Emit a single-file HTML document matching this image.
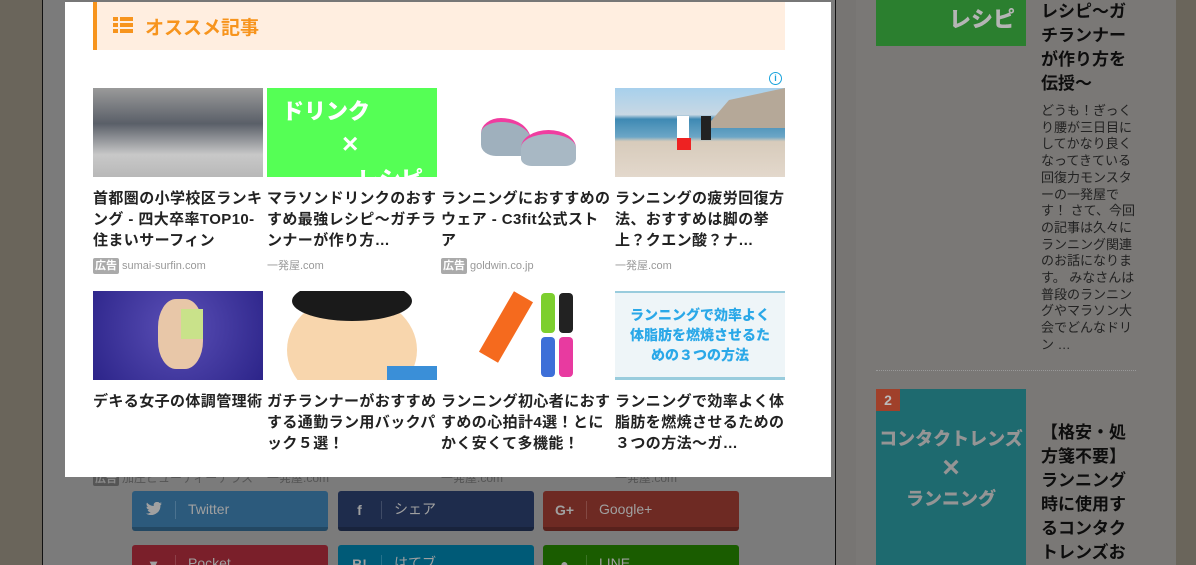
<!DOCTYPE html>
<html><head><meta charset="utf-8"><style>
*{margin:0;padding:0;box-sizing:border-box}
html,body{width:1196px;height:565px;overflow:hidden}
body{position:relative;background:#6a655b;font-family:"Liberation Sans","Noto Sans CJK JP",sans-serif}
.abs{position:absolute}
.main{left:42px;top:0;width:794px;height:565px;background:#7b7b7b;border-left:1px solid #111;border-right:1px solid #111}
.side{left:836px;top:0;width:340px;height:565px;background:#777573}
.sidecol{left:856px;top:0;width:320px;height:565px;background:#7a7876}
.st{left:1041px;width:92px;font-weight:bold;font-size:17px;line-height:24px;color:#0d0d0d}
.sb{left:1041px;top:103px;width:95px;font-size:13px;line-height:16.7px;color:#222}
.btn{height:40px;width:196px;border-radius:3px;color:#a0a0a0;font-size:14px;line-height:36px;border-bottom:4px solid rgba(0,0,0,.2)}
.btn i{display:inline-block;width:44px;text-align:center;font-style:normal;font-weight:bold;border-right:1px solid rgba(255,255,255,.15);margin-right:12px;line-height:18px;vertical-align:middle}
.modal{left:65px;top:2px;width:766px;height:475px;background:#fff;overflow:hidden}
.hdr{left:28px;top:0;width:692px;height:48px;background:#ffeee0;border-left:4px solid #f7941d}
.hdr span{position:absolute;left:48px;top:11px;font-size:19px;font-weight:bold;color:#f7941d}
.card{position:absolute;width:170px}
.img{height:89px;position:relative;overflow:hidden}
.t{margin-top:11px;font-size:15px;font-weight:bold;line-height:21px;color:#222;height:70px;letter-spacing:0.4px}
.src{font-size:11px;color:#999;line-height:16px}
.ad{display:inline-block;background:#aaa;color:#fff;font-weight:bold;font-size:11px;padding:0 2px;margin-right:3px;border-radius:2px}
</style></head><body>
<div class="abs main"></div>
<div class="abs side"></div>
<div class="abs sidecol"></div>
<div class="abs" style="left:876px;top:0;width:150px;height:46px;background:#2b7f2f;color:#b5b5b5;font-weight:900;font-size:22px;padding:2px 0 0 73px">レシピ</div>
<div class="abs st" style="top:0">レシピ～ガ<br>チランナー<br>が作り方を<br>伝授～</div>
<div class="abs sb">どうも！ぎっくり腰が三日目にしてかなり良くなってきている回復力モンスターの一発屋です！ さて、今回の記事は久々にランニング関連のお話になります。 みなさんは普段のランニングやマラソン大会でどんなドリン …</div>
<div class="abs" style="left:876px;top:370px;width:260px;border-top:1px dotted #999"></div>
<div class="abs" style="left:876px;top:389px;width:150px;height:176px;background:#1e6a6f;color:#959595;font-weight:900;text-align:center">
<div style="position:absolute;left:0;top:0;width:24px;height:22px;background:#a0402a;color:#bbb;font-size:14px;line-height:22px">2</div>
<div style="margin-top:36px;font-size:18px">コンタクトレンズ</div><div style="font-size:30px;line-height:34px">×</div><div style="font-size:18px">ランニング</div></div>
<div class="abs st" style="top:421px">【格安・処方箋不要】ランニング時に使用するコンタクトレンズお</div>
<div class="abs btn" style="left:132px;top:491px;background:#2c5a7c"><i><svg width="16" height="13" viewBox="0 0 16 13"><path d="M16 1.5a6 6 0 0 1-1.9.5A3.3 3.3 0 0 0 15.5.2a6.5 6.5 0 0 1-2 .8A3.3 3.3 0 0 0 7.8 4 9.3 9.3 0 0 1 1 .6a3.3 3.3 0 0 0 1 4.4 3.3 3.3 0 0 1-1.5-.4 3.3 3.3 0 0 0 2.6 3.2 3.3 3.3 0 0 1-1.5.1 3.3 3.3 0 0 0 3.1 2.3A6.6 6.6 0 0 1 0 11.5 9.3 9.3 0 0 0 14.4 3.2 6.7 6.7 0 0 0 16 1.5z" fill="#a0a0a0"/></svg></i>Twitter</div>
<div class="abs btn" style="left:338px;top:491px;background:#1e2c4c"><i>f</i>シェア</div>
<div class="abs btn" style="left:543px;top:491px;background:#6e2a23"><i>G+</i>Google+</div>
<div class="abs btn" style="left:132px;top:545px;background:#7a1f2a"><i>▾</i>Pocket</div>
<div class="abs btn" style="left:338px;top:545px;background:#005a77"><i>B!</i>はてブ</div>
<div class="abs btn" style="left:543px;top:545px;background:#1a5c00"><i>●</i>LINE</div>
<div class="abs" style="left:93px;top:469px;font-size:12px;color:#555"><span class="ad" style="background:#555;color:#888">広告</span>加圧ビューティーテラス</div>
<div class="abs" style="left:267px;top:469px;font-size:12px;color:#555">一発屋.com</div>
<div class="abs" style="left:441px;top:469px;font-size:12px;color:#555">一発屋.com</div>
<div class="abs" style="left:615px;top:469px;font-size:12px;color:#555">一発屋.com</div>
<div class="abs" style="left:65px;top:0;width:766px;height:2px;background:#777"></div>
<div class="abs modal">
<div class="abs hdr"><svg style="position:absolute;left:16px;top:15px" width="20" height="16"><g fill="#f7941d"><rect x="0" y="0" width="5" height="4"/><rect x="7" y="0" width="13" height="4"/><rect x="0" y="6" width="5" height="4"/><rect x="7" y="6" width="13" height="4"/><rect x="0" y="12" width="5" height="4"/><rect x="7" y="12" width="13" height="4"/></g></svg><span>オススメ記事</span></div>
<div class="abs" style="left:704px;top:70px;width:13px;height:13px;border:1.5px solid #1aa3dc;border-radius:50%;color:#1aa3dc;font-size:9px;font-weight:bold;text-align:center;line-height:10px">i</div>
<div class="card" style="left:28px;top:86px"><div class="img" style="background:linear-gradient(#9a9a9a 0%,#5a5f68 40%,#c8c8c8 75%,#b8b8b8)"></div><div class="t">首都圏の小学校区ランキング - 四大卒率TOP10-住まいサーフィン</div><div class="src"><span class="ad">広告</span>sumai-surfin.com</div></div>
<div class="card" style="left:202px;top:86px"><div class="img" style="background:#55ff55;color:#fff;font-weight:900"><div style="position:absolute;left:15px;top:6px;font-size:22px">ドリンク</div><div style="position:absolute;left:75px;top:40px;font-size:28px">×</div><div style="position:absolute;left:90px;top:74px;font-size:22px">レシピ</div></div><div class="t">マラソンドリンクのおすすめ最強レシピ～ガチランナーが作り方…</div><div class="src">一発屋.com</div></div>
<div class="card" style="left:376px;top:86px"><div class="img" style="background:#fff"><div style="position:absolute;left:40px;top:30px;width:50px;height:38px;background:#9fb0bd;border-radius:40% 60% 20% 30%;border-top:4px solid #f03da0"></div><div style="position:absolute;left:80px;top:42px;width:55px;height:36px;background:#a8b8c4;border-radius:50% 50% 20% 20%;border-top:4px solid #f03da0"></div></div><div class="t">ランニングにおすすめのウェア - C3fit公式ストア</div><div class="src"><span class="ad">広告</span>goldwin.co.jp</div></div>
<div class="card" style="left:550px;top:86px"><div class="img" style="background:linear-gradient(#a7d0ec 0%,#c8d8e4 30%,#3e89b3 35%,#6ca6c6 55%,#d7cbbb 60%,#e3d8cc)"><div style="position:absolute;left:90px;top:0;width:80px;height:40px;background:#b5a898;clip-path:polygon(0 100%,30% 30%,100% 0,100% 100%)"></div><div style="position:absolute;left:62px;top:28px;width:12px;height:22px;background:#fff"></div><div style="position:absolute;left:62px;top:50px;width:14px;height:12px;background:#e22"></div><div style="position:absolute;left:86px;top:28px;width:10px;height:24px;background:#222"></div></div><div class="t">ランニングの疲労回復方法、おすすめは脚の挙上？クエン酸？ナ…</div><div class="src">一発屋.com</div></div>
<div class="card" style="left:28px;top:289px"><div class="img" style="background:radial-gradient(circle at 50% 40%,#5a4fb6,#2c2489)"><div style="position:absolute;left:65px;top:8px;width:45px;height:70px;background:#e8c7a8;border-radius:40%"></div><div style="position:absolute;left:88px;top:18px;width:22px;height:30px;background:#c9e28a"></div></div><div class="t">デキる女子の体調管理術</div></div>
<div class="card" style="left:202px;top:289px"><div class="img" style="background:#fff"><div style="position:absolute;left:20px;top:4px;width:130px;height:110px;background:#f8d6ad;border-radius:50%"></div><div style="position:absolute;left:25px;top:-10px;width:120px;height:40px;background:#1a1a1a;border-radius:50%"></div><div style="position:absolute;left:120px;top:75px;width:50px;height:20px;background:#3a8fd8"></div></div><div class="t">ガチランナーがおすすめする通勤ラン用バックパック５選！</div></div>
<div class="card" style="left:376px;top:289px"><div class="img" style="background:#fff"><div style="position:absolute;left:30px;top:25px;width:70px;height:22px;background:#f56a1e;transform:rotate(-60deg)"></div><div style="position:absolute;left:100px;top:2px;width:14px;height:40px;background:#7dcf2e;border-radius:4px"></div><div style="position:absolute;left:118px;top:2px;width:14px;height:40px;background:#222;border-radius:4px"></div><div style="position:absolute;left:100px;top:46px;width:14px;height:40px;background:#3d6fd8;border-radius:4px"></div><div style="position:absolute;left:118px;top:46px;width:14px;height:40px;background:#e83aa0;border-radius:4px"></div></div><div class="t">ランニング初心者におすすめの心拍計4選！とにかく安くて多機能！</div></div>
<div class="card" style="left:550px;top:289px"><div class="img" style="background:#eef5f8;color:#2aa8e8;font-weight:900;font-size:14px;line-height:20px;text-align:center;padding-top:12px;border-top:2px solid #9cd;border-bottom:3px solid #9cd">ランニングで効率よく<br>体脂肪を燃焼させるた<br>めの３つの方法</div><div class="t">ランニングで効率よく体脂肪を燃焼させるための３つの方法～ガ…</div></div>
</div>
</body></html>
